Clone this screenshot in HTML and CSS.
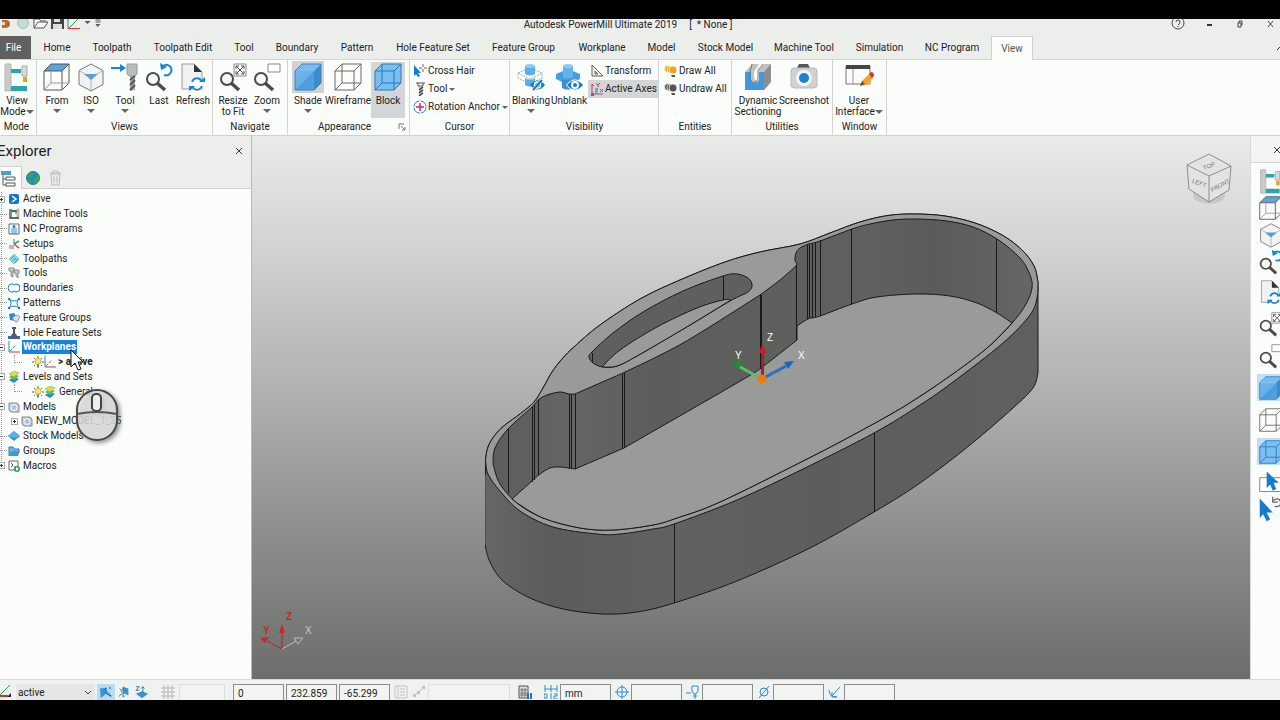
FILE: index.html
```html
<!DOCTYPE html>
<html lang="en">
<head>
<meta charset="utf-8">
<title>Autodesk PowerMill Ultimate 2019</title>
<link rel="stylesheet" href="styles.css">
</head>
<body>
<svg class="defs" aria-hidden="true">
  <defs>
    <linearGradient id="blueFace" x1="0" y1="0" x2="1" y2="1"><stop offset="0" stop-color="#74b9ee"/><stop offset=".5" stop-color="#66afe8"/><stop offset=".51" stop-color="#4d9cdb"/><stop offset="1" stop-color="#55a2df"/></linearGradient>
    <linearGradient id="wallShade" x1="0" x2="1"><stop offset="0" stop-color="#646763"/><stop offset=".12" stop-color="#5a5d59"/><stop offset=".35" stop-color="#5f625e"/><stop offset=".6" stop-color="#5b5e5a"/><stop offset="1" stop-color="#5e615d"/></linearGradient>
    <linearGradient id="innerShade" x1="0" x2="1"><stop offset="0" stop-color="#5b5e5a"/><stop offset=".15" stop-color="#636662"/><stop offset=".3" stop-color="#5b5e5a"/><stop offset=".7" stop-color="#5e615d"/><stop offset=".82" stop-color="#595c58"/><stop offset="1" stop-color="#646763"/></linearGradient>
  </defs>
  <symbol id="i-mode" viewBox="0 0 30 30"><path d="M3 2h6v27H3z" fill="#c9cbca" stroke="#b4b6b5"/><path d="M9 7h10v4H9zM9 24h16v5H9z" fill="#2aa5a8"/><path d="M20 4h5v10h-5z" fill="#d9dbda" stroke="#aaa"/><path d="M21 15h4v5h-4z" fill="#eda020"/></symbol>
  <symbol id="i-machine" viewBox="0 0 12 12"><path d="M1 1h3v10H1z" fill="#888"/><path d="M3 2h6v2H3z" fill="#157f86"/><path d="M9 1h2v8H9z" fill="#ccc" stroke="#888" stroke-width=".5"/><path d="M2 9h9v2H2z" fill="#5a6b6d"/><path d="M7 4h2v2H7z" fill="#eda020"/></symbol>
  <symbol id="i-from" viewBox="0 0 30 30"><path d="M2 9 9 2h18l-7 7z" fill="#5aa5e0"/><g fill="none" stroke="#555"><path d="M2 9h18v19H2zM2 9l7-7h18v19l-7 7M20 9l7-7"/><path d="M9 10v11h18M9 21l-7 7" stroke="#999"/></g></symbol>
  <symbol id="i-iso" viewBox="0 0 30 30"><path d="m15 2 12 6.500v14L15 29 3 22.500v-14z" fill="#f2f3f4" stroke="#777"/><path d="M8 12h14l-7 6z" fill="#4a9fe0"/><path d="m3 8.500 12 7 12-7M15 16v13" fill="none" stroke="#999" stroke-width=".7"/></symbol>
  <symbol id="i-tool" viewBox="0 0 30 30"><path d="M1 6h11" stroke="#1683d8" stroke-width="2"/><path d="m10 2 6 4-6 4z" fill="#1683d8"/><path d="M17 2h10v10l-2 2h-6l-2-2z" fill="#bbbdbd" stroke="#999"/><path d="M20 14h5v14l-5 1z" fill="#aaa"/><path d="m20 18 5-4M20 23l5-5M20 28l5-5" stroke="#555" stroke-width="2"/></symbol>
  <symbol id="i-lens" viewBox="0 0 30 30"><circle cx="9" cy="17" r="6" fill="#f8f8f8" stroke="#4b4b4b" stroke-width="2"/><path d="m13 21 8 7" stroke="#4b4b4b" stroke-width="3.500"/></symbol>
  <symbol id="i-last" viewBox="0 0 30 30"><use href="#i-lens"/><path d="M18 5c5-5 11 0 9 5-1 3-4 4-7 3" fill="none" stroke="#1683d8" stroke-width="2"/><path d="m16 1 1 7 6-3z" fill="#1683d8"/></symbol>
  <symbol id="i-refresh" viewBox="0 0 30 30"><path d="M4 2h12l8 8v17H4z" fill="#f0f1f1" stroke="#999"/><path d="M16 2v8h8z" fill="#333"/><circle cx="19" cy="22" r="7" fill="#fcfcfc"/><path d="M14 20c2-5 8-5 10 0M24 24c-2 5-8 5-10 0" fill="none" stroke="#1683d8" stroke-width="2"/><path d="M21 20h6v-5zM17 24h-6v5z" fill="#1683d8"/></symbol>
  <symbol id="i-resize" viewBox="0 0 30 30"><use href="#i-lens"/><path d="M16 2h12v12H16z" fill="#fff" stroke="#888"/><path d="m18 4 8 8m0-8-8 8M18 7V4h3M23 4h3v3M26 9v3h-3M21 12h-3V9" fill="none" stroke="#555"/></symbol>
  <symbol id="i-zoom" viewBox="0 0 30 30"><use href="#i-lens"/><path d="M16 2h12v8H16z" fill="#fff" stroke="#888"/></symbol>
  <symbol id="i-shade" viewBox="0 0 30 30"><path d="m2 9 7-7h19l-7 7z" fill="#7abcf0"/><path d="M2 9h19v19H2z" fill="url(#blueFace)"/><path d="m21 9 7-7v19l-7 7z" fill="#3b8cca"/><path d="m2 9 7-7h19v19l-7 7H2z" fill="none" stroke="#3b85bd"/></symbol>
  <symbol id="i-wire" viewBox="0 0 30 30"><path d="M2 9h19v19H2zM9 2h19v19H9zM2 9l7-7M21 9l7-7M2 28l7-7M21 28l7-7" fill="none" stroke="#666"/></symbol>
  <symbol id="i-block" viewBox="0 0 30 30"><path d="m2 9 7-7h19v19l-7 7H2z" fill="#78bff4"/><path d="M2 9h19v19H2zM9 2h19v19H9zM2 9l7-7M21 9l7-7M2 28l7-7M21 28l7-7" fill="none" stroke="#2f79b0"/></symbol>
  <symbol id="i-blank" viewBox="0 0 30 30"><path d="m2 11 12-5 12 5v5l-12 6-12-6zM2 11l12 6 12-6" fill="none" stroke="#aaa" stroke-dasharray="2 1"/><path d="M9 4h10v8q-5 3-10 0zM9 16q5 3 10 0v7q-5 3-10 0z" fill="#5badea"/><ellipse cx="14" cy="4" rx="5" ry="2" fill="#8ccbf5"/><path d="M14 23q8-9 15 0-7 9-15 0" fill="#1978c8"/><circle cx="21.500" cy="23" r="3" fill="#1978c8" stroke="#fff" stroke-width="1.500"/><path d="m17 28 9-10" stroke="#fff" stroke-width="3"/><path d="m17 28 9-10" stroke="#1978c8" stroke-width="2"/></symbol>
  <symbol id="i-unblank" viewBox="0 0 30 30"><path d="m2 12 12-5 12 5v5l-12 6-12-6z" fill="#469de0"/><path d="M8 18h12v8q-6 3-12 0z" fill="#3b8fd2"/><path d="M9 4h10v11q-5 3-10 0z" fill="#65b3ec"/><ellipse cx="14" cy="4" rx="5" ry="2" fill="#8ccbf5"/><path d="M12 23q9-11 18 0-9 11-18 0" fill="#fff"/><path d="M13 23q8-9 16 0-8 9-16 0" fill="#1978c8"/><circle cx="21" cy="23" r="3" fill="#1978c8" stroke="#fff" stroke-width="2"/></symbol>
  <symbol id="i-section" viewBox="0 0 30 30"><path d="m2 10 7-8h7l-5 8v6q1 4 5 2V7l5-5h7v18l-7 8H2z" fill="#bfc1c2"/><path d="M2 10h6v7q0 4 4 4t4-4v-7h5v18H2z" fill="#3f99dd"/><path d="m21 10 7-8v18l-7 8z" fill="#8c8f91"/><path d="M9 2 7 10v7q2 5 6 3l2-3V8l5-6" fill="none" stroke="#777"/></symbol>
  <symbol id="i-camera" viewBox="0 0 30 30"><path d="m8 6 2-4h9l2 4z" fill="#555"/><rect x="2" y="6" width="26" height="20" rx="3" fill="#cfd1d2" stroke="#bbb"/><circle cx="15" cy="16" r="8" fill="#f4f4f4"/><circle cx="15" cy="16" r="5" fill="#1683d8"/></symbol>
  <symbol id="i-ui" viewBox="0 0 30 30"><path d="M2 4h24v18H2z" fill="#fafafa" stroke="#777"/><path d="M2 3h24v4H2z" fill="#444"/><path d="M9 7v15" stroke="#999"/><path d="m16 24 2-5 7-7 4 4-7 7z" fill="#f2a51e"/><path d="m25 12 2-2q3 0 3 4l-2 2z" fill="#e12f2b"/><path d="m16 24 2-5 3 3z" fill="#555"/></symbol>
  <symbol id="i-cross" viewBox="0 0 14 14"><path d="m1 1 7 8H5l2 3-2 1-2-3-2 2z" fill="#147bcd"/><path d="M10 0v3m0 2v3M6 4h3m2 0h3" stroke="#666"/></symbol>
  <symbol id="i-toolcur" viewBox="0 0 14 14"><path d="M3 1h9M5 1v3h5V1" fill="none" stroke="#555"/><path d="M6 5h4v7l-4 2z" fill="#bbb"/><path d="m6 8 4-3M6 11l4-3M6 14l4-3" stroke="#444" stroke-width="1.500"/></symbol>
  <symbol id="i-anchor" viewBox="0 0 14 14"><circle cx="7" cy="7" r="6" fill="#fff" stroke="#1683d8" stroke-dasharray="8 1.400"/><path d="M7 3v8M3 7h8" stroke="#d51d70" stroke-width="1.500"/></symbol>
  <symbol id="i-transform" viewBox="0 0 14 14"><path d="M2 1v11h11zM5 7v3h3z" fill="none" stroke="#555"/></symbol>
  <symbol id="i-axes" viewBox="0 0 14 14"><path d="M2 2v10h11M2 2l2 2M6 1l2 2 2-2M8 3v2" fill="none" stroke="#d43b3b"/><path d="M5 7h3l-3 3h3" fill="none" stroke="#1683d8"/><path d="m10 7 3 3m0-3-3 3" stroke="#d43b3b"/><path d="M1 11h3v3H1z" fill="#1683d8"/></symbol>
  <symbol id="i-coins" viewBox="0 0 14 14"><g fill="currentColor" stroke="#fff" stroke-width=".7"><circle cx="4" cy="5" r="3.500"/><circle cx="6.500" cy="5.500" r="3.500"/><circle cx="9" cy="6" r="4"/></g><path d="M7 11h4v2H8z" fill="#555"/></symbol>
  <symbol id="i-active" viewBox="0 0 12 12"><rect x="1" y="1" width="10" height="10" rx="2" fill="#1874c5"/><path d="m4 3 4 3-4 3" fill="none" stroke="#fff" stroke-width="1.500"/></symbol>
  <symbol id="i-nc" viewBox="0 0 12 12"><path d="M1 1h10v10H1z" fill="#fff" stroke="#666"/><circle cx="6" cy="3.500" r="1.500" fill="#1683d8"/><path d="M3 6h6M3 8h6M3 10h6" stroke="#2c8bd0"/></symbol>
  <symbol id="i-setup" viewBox="0 0 12 12"><path d="M1 7h5v4H1z" fill="#bbb"/><path d="M6 1v5" stroke="#1683d8"/><path d="m6 6 5-3" stroke="#39a84c" stroke-width="1.500"/><path d="m6 6 5 4" stroke="#d33" stroke-width="1.500"/></symbol>
  <symbol id="i-path" viewBox="0 0 12 12"><path d="m6 1 5 5-5 5-5-5z" fill="#81dce3" stroke="#6fd3dc"/><path d="m3 6 3-3m-1 5 3-3m-1 5 3-4" stroke="#29aebb"/></symbol>
  <symbol id="i-tools" viewBox="0 0 12 12"><path d="M1 1h5v3H5v6L3 9V4H1zM6 3h5v3h-1v5L8 9V6H6z" fill="#ccc" stroke="#777" stroke-width=".8"/></symbol>
  <symbol id="i-bound" viewBox="0 0 12 12"><path d="M3 2h2q1 2 3 0 4 0 4 4t-4 4q-2-2-3 0H3Q0 9 0 6t3-4z" fill="none" stroke="#167bcd"/></symbol>
  <symbol id="i-pattern" viewBox="0 0 12 12"><path d="M1 2q5 4 10 0-4 4 0 9-5-4-10 0 4-5 0-9z" fill="none" stroke="#1683d8"/><path d="M0 1h2v2H0zM10 1h2v2h-2zM0 10h2v2H0zM10 10h2v2h-2z" fill="#1683d8"/></symbol>
  <symbol id="i-feature" viewBox="0 0 12 12"><path d="M1 2 6 1l2 3-1 5-5-1z" fill="#2e87cd"/><path d="m5 5 4-2 3 2-3 5-4-2z" fill="#d5e7f4" stroke="#899"/></symbol>
  <symbol id="i-hole" viewBox="0 0 12 12"><path d="M4 0h4v2H7v4q3 3 3 6H2q0-3 3-6V2H4z" fill="#557"/><path d="M0 9h3v3H0zM9 9h3v3H9z" fill="#2d6fa8"/></symbol>
  <symbol id="i-wp" viewBox="0 0 12 12"><path d="M1 0v11" stroke="#2c8bd0"/><path d="m2 10 6-6" stroke="#2da75a" stroke-dasharray="3 1"/><path d="M1 11h11" stroke="#d33"/></symbol>
  <symbol id="i-levels" viewBox="0 0 12 12"><path d="m1 9 5-3 5 2-5 4z" fill="#208dc2"/><path d="m1 6 5-3 5 2-5 4z" fill="#56c266"/><path d="m1 3 5-3 5 2-5 4z" fill="#ecd944" stroke="#65ab58" stroke-width=".5"/></symbol>
  <symbol id="i-model" viewBox="0 0 12 12"><path d="M1 2h8l2 2v7H3L1 9z" fill="#c8ccd0" stroke="#888"/><circle cx="6" cy="6.500" r="3" fill="#9fc8e7" stroke="#fff"/></symbol>
  <symbol id="i-stock" viewBox="0 0 12 12"><path d="m0 6 6-5 6 5-6 5z" fill="#368fd0"/><path d="m0 6 6-5 6 5-6 2z" fill="#55b1e9"/></symbol>
  <symbol id="i-folder" viewBox="0 0 12 12"><path d="M1 11V2h4l1 2h5v2" fill="#73b6e8" stroke="#287ab7"/><path d="M1 11 3 6h9l-2 5z" fill="#4497d5"/></symbol>
  <symbol id="i-macro" viewBox="0 0 12 12"><path d="M1 1h9v9H1z" fill="#fafafa" stroke="#666"/><path d="m3 3 2 2-2 2m3 0h3" fill="none" stroke="#555"/><circle cx="9" cy="9" r="3" fill="#28a355"/><path d="m8 7 3 2-3 2z" fill="#fff"/></symbol>
  <symbol id="i-bulb" viewBox="0 0 12 12"><path d="M6 0v12M0 6h12M2 2l8 8m0-8-8 8" stroke="#555" stroke-dasharray="2 8"/><circle cx="6" cy="5.500" r="3" fill="#ffe85c" stroke="#c8b64b"/><path d="M5 8h2v3H5z" fill="#888"/></symbol>
  <symbol id="i-plane-yz" viewBox="0 0 16 16"><path d="m1 4 7-1v7l-6 5z" fill="#3993d7"/><path d="M8 3v6l6 4" fill="none" stroke="#246ea5" stroke-width="1.500"/><path d="m9 7 4 3M11 2l3 3m0-3-3 3" stroke="#3993d7"/></symbol>
  <symbol id="i-plane-xz" viewBox="0 0 16 16"><path d="m7 2 6 2v8l-6-3z" fill="#3993d7"/><path d="M7 2v12M7 9l-5 4M3 4l2 2 2-2M5 6v2M7 14l2-2" fill="none" stroke="#246ea5"/></symbol>
  <symbol id="i-grid" viewBox="0 0 14 14"><path d="M3 0v14M7 0v14M11 0v14M0 3h14M0 7h14M0 11h14" stroke="#b5b7b5"/></symbol>
</svg>

<div class="letterbox letterbox-top"></div>
<div class="app">
  <header class="titlebar">
    <div class="quick">
      <svg class="q-logo" viewBox="0 0 10 16"><path d="M0 1h4q4 0 4 4t-5 4H0z" fill="#b36b2e"/><path d="M0 3h3v3H0z" fill="#f0d9c2"/></svg>
      <svg class="q-icon" viewBox="0 0 16 16"><circle cx="8" cy="4" r="5.500" fill="#c4ddd2" stroke="#9fbfb4"/></svg>
      <svg class="q-icon" viewBox="0 0 16 16"><path d="M2 9V0h5l2 2h5M2 9l4-6h10l-4 6z" fill="#f8f8f8" stroke="#555"/></svg>
      <svg class="q-icon" viewBox="0 0 16 16"><path d="M2 0h13v10H2z" fill="#444"/><path d="M5 0h6v3H5zM4 5h9v5H4z" fill="#ddd"/></svg>
      <svg class="q-icon" viewBox="0 0 16 16"><path d="M2 0v10" stroke="#1683d8"/><path d="m3 9 9-9" stroke="#259a55"/><path d="M2 9.500h12" stroke="#d33"/></svg>
      <svg class="q-arrow" viewBox="0 0 8 8"><path d="M1 2h6L4 5z" fill="#555"/></svg>
      <svg class="q-arrow" viewBox="0 0 8 8"><path d="M2 1h5M2 3h5" stroke="#555"/><path d="M2 5h5L4 8z" fill="#555"/></svg>
    </div>
    <div class="title"><span>Autodesk PowerMill Ultimate 2019</span><span>[ &nbsp;* None ]</span></div>
    <div class="controls">
      <button aria-label="Help"><svg viewBox="0 0 14 14"><circle cx="7" cy="4" r="6" fill="none" stroke="#444"/><path d="M5 3q0-2 2-2t2 2-2 3M7 7v1" fill="none" stroke="#444"/></svg></button>
      <button aria-label="Minimize"><svg viewBox="0 0 14 14"><path d="M5 6h5" stroke="#333" stroke-width="2"/></svg></button>
      <button aria-label="Restore"><svg viewBox="0 0 14 14"><path d="M5 4h3v4H5zM6 4V2h3v4H8" fill="none" stroke="#444"/></svg></button>
      <button aria-label="Close"><svg viewBox="0 0 14 14"><path d="m4 2 5 6m0-6L4 8" stroke="#444"/></svg></button>
    </div>
  </header>

  <nav class="tabs">
    <button class="tab file">File</button><button class="tab">Home</button><button class="tab">Toolpath</button><button class="tab">Toolpath Edit</button><button class="tab">Tool</button><button class="tab">Boundary</button><button class="tab">Pattern</button><button class="tab">Hole Feature Set</button><button class="tab">Feature Group</button><button class="tab">Workplane</button><button class="tab">Model</button><button class="tab">Stock Model</button><button class="tab">Machine Tool</button><button class="tab">Simulation</button><button class="tab">NC Program</button><button class="tab current">View</button><button class="tab collapse" aria-label="Collapse ribbon"><svg viewBox="0 0 8 8"><path d="m1 6 3-3 3 3" fill="none" stroke="#333"/></svg></button>
  </nav>

  <div class="ribbon">
    <section class="group g-mode"><div class="tools">
      <button class="big"><svg class="ico"><use href="#i-mode"/></svg><span>View</span><span class="drop-line">Mode<i class="caret"></i></span></button>
    </div><h2>Mode</h2></section>
    <section class="group g-views"><div class="tools">
      <button class="big"><svg class="ico"><use href="#i-from"/></svg><span>From</span><i class="caret"></i></button>
      <button class="big"><svg class="ico"><use href="#i-iso"/></svg><span>ISO</span><i class="caret"></i></button>
      <button class="big"><svg class="ico"><use href="#i-tool"/></svg><span>Tool</span><i class="caret"></i></button>
      <button class="big"><svg class="ico"><use href="#i-last"/></svg><span>Last</span></button>
      <button class="big"><svg class="ico"><use href="#i-refresh"/></svg><span>Refresh</span></button>
    </div><h2>Views</h2></section>
    <section class="group g-nav"><div class="tools">
      <button class="big"><svg class="ico"><use href="#i-resize"/></svg><span>Resize</span><span>to Fit</span></button>
      <button class="big"><svg class="ico"><use href="#i-zoom"/></svg><span>Zoom</span><i class="caret"></i></button>
    </div><h2>Navigate</h2></section>
    <section class="group g-look"><div class="tools">
      <button class="big lit"><svg class="ico"><use href="#i-shade"/></svg><span>Shade</span><i class="caret"></i></button>
      <button class="big wide"><svg class="ico"><use href="#i-wire"/></svg><span>Wireframe</span></button>
      <button class="big pressed"><svg class="ico"><use href="#i-block"/></svg><span>Block</span></button>
    </div><div class="foot"><h2>Appearance</h2><button class="launcher" aria-label="Appearance options"><svg viewBox="0 0 8 8"><path d="M1 6V1h5M3 3l4 4M7 4v3H4" fill="none" stroke="#777"/></svg></button></div></section>
    <section class="group g-cursor"><div class="stack">
      <button class="small"><svg><use href="#i-cross"/></svg>Cross Hair</button>
      <button class="small"><svg><use href="#i-toolcur"/></svg>Tool<i class="caret"></i></button>
      <button class="small"><svg><use href="#i-anchor"/></svg>Rotation Anchor<i class="caret"></i></button>
    </div><h2>Cursor</h2></section>
    <section class="group g-vis"><div class="tools">
      <button class="big medium"><svg class="ico"><use href="#i-blank"/></svg><span>Blanking</span><i class="caret"></i></button>
      <button class="big medium"><svg class="ico"><use href="#i-unblank"/></svg><span>Unblank</span></button>
      <div class="stack"><button class="small"><svg><use href="#i-transform"/></svg>Transform</button><button class="small pressed"><svg><use href="#i-axes"/></svg>Active Axes</button></div>
    </div><h2>Visibility</h2></section>
    <section class="group g-ent"><div class="stack">
      <button class="small"><svg class="gold"><use href="#i-coins"/></svg>Draw All</button>
      <button class="small"><svg class="dim"><use href="#i-coins"/></svg>Undraw All</button>
    </div><h2>Entities</h2></section>
    <section class="group g-util"><div class="tools">
      <button class="big wide"><svg class="ico"><use href="#i-section"/></svg><span>Dynamic</span><span>Sectioning</span></button>
      <button class="big wide"><svg class="ico"><use href="#i-camera"/></svg><span>Screenshot</span></button>
    </div><h2>Utilities</h2></section>
    <section class="group g-win"><div class="tools">
      <button class="big wide"><svg class="ico"><use href="#i-ui"/></svg><span>User</span><span class="drop-line">Interface<i class="caret"></i></span></button>
    </div><h2>Window</h2></section>
  </div>

  <main class="work">
    <aside class="explorer">
      <header class="panel-head"><h1>Explorer</h1><button aria-label="Close Explorer"><svg viewBox="0 0 8 8"><path d="m1 1 6 6m0-6L1 7" stroke="#333"/></svg></button></header>
      <div class="panel-tabs">
        <button class="on" aria-label="Tree"><svg viewBox="0 0 16 16"><path d="M0 0h10v4H0z" fill="#4a9cdb"/><path d="M2 4v10h3M2 8h3M5 6h9v3H5zM5 12h9v3H5z" fill="none" stroke="#555"/></svg></button>
        <button aria-label="Web"><svg viewBox="0 0 16 16"><circle cx="8" cy="8" r="6.500" fill="#2387c8" stroke="#37739a"/><path d="M3 4q5-4 6-1l-2 3-1 2-4-1zM9 8l5-3 1 4-4 5-3-1zM3 9l3 2 1 4-4-3z" fill="#36a65b"/></svg></button>
        <button aria-label="Recycle bin" disabled><svg viewBox="0 0 16 16"><path d="M4 4h9l-1 11H5zM3 3h11M6 3V1h5v2M7 6v7M10 6v7" fill="none" stroke="#bbb"/></svg></button>
      </div>
      <ul class="tree">
        <li><i class="box plus"></i><svg><use href="#i-active"/></svg><span>Active</span></li>
        <li><i></i><svg><use href="#i-machine"/></svg><span>Machine Tools</span></li>
        <li><i></i><svg><use href="#i-nc"/></svg><span>NC Programs</span></li>
        <li><i></i><svg><use href="#i-setup"/></svg><span>Setups</span></li>
        <li><i></i><svg><use href="#i-path"/></svg><span>Toolpaths</span></li>
        <li><i></i><svg><use href="#i-tools"/></svg><span>Tools</span></li>
        <li><i></i><svg><use href="#i-bound"/></svg><span>Boundaries</span></li>
        <li><i></i><svg><use href="#i-pattern"/></svg><span>Patterns</span></li>
        <li><i></i><svg><use href="#i-feature"/></svg><span>Feature Groups</span></li>
        <li><i></i><svg><use href="#i-hole"/></svg><span>Hole Feature Sets</span></li>
        <li><i class="box"></i><svg><use href="#i-wp"/></svg><span class="selected">Workplanes</span></li>
        <li class="child"><i class="elbow"></i><svg><use href="#i-bulb"/></svg><svg><use href="#i-wp"/></svg><b>&gt; active</b></li>
        <li><i class="box"></i><svg><use href="#i-levels"/></svg><span>Levels and Sets</span></li>
        <li class="child"><i class="elbow"></i><svg><use href="#i-bulb"/></svg><svg><use href="#i-levels"/></svg><span>General</span></li>
        <li><i class="box"></i><svg><use href="#i-model"/></svg><span>Models</span></li>
        <li class="model"><i class="box plus"></i><svg><use href="#i-model"/></svg><span>NEW_MODEL_1_25</span></li>
        <li><i></i><svg><use href="#i-stock"/></svg><span>Stock Models</span></li>
        <li><i></i><svg><use href="#i-folder"/></svg><span>Groups</span></li>
        <li><i class="box plus"></i><svg><use href="#i-macro"/></svg><span>Macros</span></li>
      </ul>
      <svg class="pointer" viewBox="0 0 14 22"><path d="M1 1v17l4-4 3 7 3-1-3-7h5z" fill="#fff" stroke="#111"/></svg>
      <svg class="mouse" viewBox="0 0 50 60"><rect x="5" y="4" width="40" height="50" rx="20" fill="#f6f6f6" fill-opacity=".65" stroke="#484848" stroke-width="2"/><path d="M5 28q20-4 40 0" fill="none" stroke="#555" stroke-width="2"/><rect x="20" y="8" width="9" height="17" rx="4" fill="#eee" stroke="#444" stroke-width="2"/></svg>
    </aside>

    <section class="canvas" aria-label="Graphics view">
      <svg class="scene" viewBox="252 136 998 543" preserveAspectRatio="xMidYMid meet">
        <g class="part">
          <path id="body" fill="url(#wallShade)"/>
          <path id="rim" fill="#999b98"/>
          <path id="pocket" fill="url(#innerShade)"/>
          <path id="floor" fill="#999b98"/>
          <path id="slot" fill="#5d605c"/>
          <path id="slotFloor" fill="#999b98"/>
          <path d="M508.500 429v64M532.500 406v76M534.500 404v76M538.500 400v75M569.500 394v75M571.500 394v75M575.500 394v75M622.500 374v75M624.500 373v75M760.500 295v74M761.500 295v74M796.500 265v75M807.500 245v74M809.500 244v74M812.500 243v75M815.500 242v75M820.500 240v75M851.500 229v75M996.500 239v74M723.500 276v24M592.500 353v9M674.500 524v79M874.500 433v79"/>
        </g>
        <path d="M485.500 475v70" stroke="#a65239" stroke-width=".7"/>
        <g class="triad">
          <path d="m762 379 24-13" stroke="#2a6fc0" stroke-width="3"/><path d="m794 361-10 1 4 7z" fill="#1f62b8"/>
          <path d="m762 379-22-12" stroke="#5dc060" stroke-width="3"/><path d="m732 362 10 0-4 8z" fill="#218b35"/>
          <path d="M762.500 379v-27" stroke="#a5202b" stroke-width="3"/><path d="m762.500 344 4 9h-8z" fill="#c31e2b"/>
          <circle cx="762" cy="379" r="4.500" fill="#e77d08"/>
          <text x="767" y="341">Z</text><text x="735" y="359">Y</text><text x="798" y="359">X</text>
        </g>
        <g class="origin">
          <path d="M282 649v-19M282 649l-15-8" stroke="#b42323" fill="none"/><path d="m282 624 3 9h-6zM260 638l9-1-4 6z" fill="#c62828"/>
          <path d="m282 649 14-8" stroke="#bbb"/><path d="m303 638-9 0 4 6z" fill="none" stroke="#bbb"/>
          <text x="286" y="620" class="red">Z</text><text x="263" y="634" class="red">Y</text><text x="305" y="634" class="pale">X</text>
        </g>
        <g class="cube">
          <ellipse cx="1209" cy="195" rx="16" ry="9" fill="#777" opacity=".2"/>
          <path d="m1209 154 22 12-2 24-20 12-20-13-2-24z" fill="#e2e4e2" stroke="#777" stroke-width=".8"/>
          <path d="m1187 165 22 11 22-10M1209 176v26" fill="none" stroke="#777" stroke-width=".8"/>
          <text x="1203" y="168" transform="rotate(-20 1209 166)">TOP</text><text x="1192" y="185" transform="rotate(20 1199 183)">LEFT</text><text x="1210" y="188" transform="rotate(-28 1219 186)">FRONT</text>
        </g>
      </svg>
    </section>

    <aside class="dock">
      <header><button aria-label="Close toolbar"><svg viewBox="0 0 8 8"><path d="m1 1 6 6m0-6L1 7" stroke="#333"/></svg></button></header>
      <div class="dock-tight">
        <button aria-label="View mode"><svg><use href="#i-mode"/></svg></button><button aria-label="From"><svg><use href="#i-from"/></svg></button><button aria-label="ISO"><svg><use href="#i-iso"/></svg></button><button aria-label="Last"><svg><use href="#i-last"/></svg></button>
      </div>
      <div class="dock-loose">
        <button aria-label="Refresh"><svg><use href="#i-refresh"/></svg></button><button aria-label="Resize to fit"><svg><use href="#i-resize"/></svg></button><button aria-label="Zoom"><svg><use href="#i-zoom"/></svg></button><button class="on" aria-label="Shade"><svg><use href="#i-shade"/></svg></button><button aria-label="Wireframe"><svg><use href="#i-wire"/></svg></button><button class="on" aria-label="Block"><svg><use href="#i-block"/></svg></button>
      </div>
      <div class="dock-tight last">
        <button aria-label="Box select"><svg viewBox="0 0 30 30"><path d="M2 10h28v16H2z" fill="#fff" stroke="#777"/><path d="m10 3 14 13h-6l3 7-4 2-3-7-4 4z" fill="#147bcd"/></svg></button><button aria-label="Select last"><svg viewBox="0 0 30 30"><path d="m2 3 15 16h-7l4 8-4 2-4-8-4 4z" fill="#147bcd"/><path d="M18 5q7-4 8 2t-7 5M17 1v6h6" fill="none" stroke="#666" stroke-width="1.500"/></svg></button>
      </div>
    </aside>
  </main>

  <footer class="status">
    <svg class="wp" viewBox="0 0 14 14"><path d="m0 11 10-10" stroke="#259a55"/><path d="M0 12h8" stroke="#c33" stroke-width="2"/><path d="M11 9v4H7z" fill="#222"/></svg>
    <div class="picker"><select class="plane" aria-label="Active workplane"><option>active</option></select><svg class="chevron" viewBox="0 0 8 8"><path d="m1 2 3 3 3-3" fill="none" stroke="#444"/></svg></div>
    <button class="sq on" aria-label="YZ plane"><svg><use href="#i-plane-yz"/></svg></button>
    <button class="sq" aria-label="XZ plane"><svg><use href="#i-plane-xz"/></svg></button>
    <button class="sq" aria-label="XY plane"><svg viewBox="0 0 16 16"><path d="m1 10 7-3 7 3-7 5z" fill="#3993d7"/><path d="M9 2v7M7 4l2-2 2 2M1 2h4L1 6h4" fill="none" stroke="#246ea5"/></svg></button>
    <button class="sq grid-btn" aria-label="Grid"><svg><use href="#i-grid"/></svg></button>
    <input class="field off" aria-label="Grid size" disabled>
    <input class="field first" aria-label="X" value="0">
    <input class="field" aria-label="Y" value="232.859">
    <input class="field" aria-label="Z" value="-65.299">
    <button class="sq" aria-label="Position"><svg viewBox="0 0 14 14"><path d="M1 1h12v12H1zM4 1v12M6 4h5M6 7h5M6 10h5" fill="none" stroke="#c3c5c3"/></svg></button>
    <button class="sq" aria-label="Measure"><svg viewBox="0 0 14 14"><path d="m2 11 9-8" stroke="#bbb"/><path d="M1 9h3v3H1zM5 6h3v3H5zM10 1h3v3h-3z" fill="#c1c3c1"/></svg></button>
    <input class="field off long" aria-label="Distance" disabled>
    <button class="sq" aria-label="Calculator"><svg viewBox="0 0 14 14"><path d="M1 1h9v12H1z" fill="#ddd" stroke="#555"/><path d="M2 5h7M2 8h7M2 10h7M4 3v9M7 3v9" stroke="#777"/><path d="M9 8h2v6H9zM12 8h2v6h-2z" fill="#147bcd"/></svg></button>
    <button class="sq units" aria-label="Units"><svg viewBox="0 0 14 14"><path d="M1 0v7M7 0v7M13 0v7M1 4h12M0 9h3v4H0zM7 8v6M10 9h3v2h-3v3h4" fill="none" stroke="#2c8bd0"/></svg></button>
    <input class="field" aria-label="Unit" value="mm">
    <button class="sq" aria-label="Tolerance"><svg viewBox="0 0 14 14"><circle cx="7" cy="7" r="5" fill="none" stroke="#2c8bd0"/><path d="M7 0v14M0 7h14" stroke="#2c8bd0"/></svg></button>
    <input class="field" aria-label="Tolerance value">
    <button class="sq" aria-label="Thickness"><svg viewBox="0 0 14 14"><path d="M0 8h5M6 1h6v5l-2 3H8L6 6zM9 9v5M7 11h4" fill="none" stroke="#2c8bd0"/></svg></button>
    <input class="field" aria-label="Thickness value">
    <button class="sq" aria-label="Diameter"><svg viewBox="0 0 14 14"><circle cx="7" cy="7" r="4" fill="none" stroke="#2c8bd0"/><path d="M2 13 12 1" stroke="#2c8bd0"/></svg></button>
    <input class="field" aria-label="Diameter value">
    <button class="sq" aria-label="Tip radius"><svg viewBox="0 0 14 14"><path d="m12 2-8 9M1 5q0 7 8 7M4 7v5h5" fill="none" stroke="#2c8bd0"/></svg></button>
    <input class="field" aria-label="Tip radius value">
  </footer>
</div>
<div class="letterbox"></div>
<script src="scene.js"></script>
</body>
</html>
```
FILE: styles.css
```css
* { box-sizing: border-box; }
html, body { height: 100%; }
body {
  margin: 0;
  display: flex;
  flex-direction: column;
  overflow: hidden;
  background: #000;
  color: #222;
  font: 10px/12px Roboto, "Open Sans", sans-serif;
}
button, input, select { font: inherit; color: inherit; margin: 0; padding: 0; border: 0; background: none; border-radius: 0; }
h1, h2 { margin: 0; font-weight: 400; }
svg { display: block; flex: none; }
.defs { position: absolute; width: 0; height: 0; }
.letterbox { flex: none; height: 20px; }
.letterbox-top { height: 19px; }
.app { flex: 1; min-height: 0; display: flex; flex-direction: column; background: #eceeec; }

.titlebar { flex: none; height: 17px; display: flex; overflow: hidden; }
.quick { width: 100px; display: flex; gap: 1px; }
.q-logo { width: 14px; height: 16px; }
.q-icon { width: 16px; height: 16px; }
.q-arrow { width: 9px; height: 8px; }
.title { flex: 1; display: flex; justify-content: center; gap: 12px; line-height: 11px; }
.controls { width: 124px; padding-left: 6px; display: flex; overflow: hidden; }
.controls button { flex: none; width: 31px; height: 14px; display: flex; justify-content: center; }
.controls svg { width: 14px; height: 14px; }

.tabs {
  flex: none;
  height: 24px;
  display: grid;
  grid-template-columns: 31px 52px 58px 84px 38px 68px 52px 100px 81px 76px 43px 85px 72px 79px 66px 48px 1fr;
  border-bottom: 1px solid #d4d6d4;
}
.tab { white-space: nowrap; text-align: center; }
.file { background: #5f605f; color: #fff; padding-right: 4px; }
.current { background: #fbfdfb; border: 1px solid #cfd1cf; border-bottom: 0; margin-bottom: -1px; margin-left: 6px; color: #555; }
.collapse { display: flex; justify-content: flex-end; align-items: center; }
.collapse svg { width: 8px; height: 8px; margin-right: -4px; }

.ribbon { flex: none; height: 76px; display: flex; background: #fbfdfb; border-bottom: 1px solid #cfd1cf; }
.group { display: flex; flex-direction: column; justify-content: space-between; padding: 2px 3px; border-right: 1px solid #d2d4d2; }
.group h2 { flex: 1; font-size: 10px; line-height: 12px; text-align: center; }
.tools + h2, .stack + h2, .foot { flex: none; }
.tools { display: flex; }
.g-mode { width: 37px; padding-left: 0; }
.g-views { width: 176px; }
.g-nav { width: 75px; }
.g-look { width: 122px; }
.g-cursor { width: 100px; padding-left: 1px; padding-right: 1px; }
.g-vis { width: 149px; padding-left: 2px; padding-right: 1px; }
.g-ent { width: 73px; }
.g-util { width: 101px; }
.g-win { width: 54px; }
.big { flex: none; width: 34px; height: 56px; display: flex; flex-direction: column; align-items: center; line-height: 11px; white-space: nowrap; }
.medium { width: 38px; }
.wide { width: 46px; }
.ico { width: 30px; height: 30px; margin-bottom: 3px; }
.caret { display: inline-block; border: 4px solid transparent; border-top-color: #666; border-bottom: 0; margin: 3px 0 0; }
.drop-line { display: flex; align-items: center; }
.drop-line .caret { margin: 0; }
.pressed { background: #d3d6d8; }
.lit .ico { background: #cfd2d4; outline: 2px solid #cfd2d4; outline-offset: -1px; }
.foot { display: flex; }
.launcher svg { width: 8px; height: 8px; }
.stack { display: flex; flex-direction: column; align-items: stretch; }
.small { height: 18px; display: flex; align-items: center; gap: 1px; padding: 0 1px 0 2px; white-space: nowrap; }
.small svg { width: 14px; height: 14px; }
.small .caret { border-width: 3px; border-bottom: 0; margin: 0 0 0 1px; }
.gold { color: #efa31d; }
.dim { color: #555; }

.work { flex: 1; min-height: 0; display: flex; }
.explorer { position: relative; flex: none; width: 252px; display: flex; flex-direction: column; background: #fbfdfb; border-right: 1px solid #b9bbb9; overflow: hidden; }
.panel-head { height: 30px; display: flex; justify-content: space-between; align-items: center; padding-right: 8px; background: #eceeec; }
.panel-head h1 { margin-left: -3px; font-size: 15px; line-height: 20px; }
.panel-head svg { width: 8px; height: 8px; }
.panel-tabs { height: 23px; display: flex; background: #eceeec; border-bottom: 1px solid #cfd1cf; }
.panel-tabs button { width: 22px; display: flex; justify-content: center; padding-top: 4px; }
.panel-tabs svg { width: 16px; height: 16px; }
.panel-tabs .on { background: #fbfdfb; border: 1px solid #cfd1cf; border-width: 1px 1px 0 0; margin-bottom: -1px; padding-right: 3px; }
.tree { position: relative; list-style: none; margin: 3px 0 0; padding: 0; height: 281px; display: flex; flex-direction: column; }
.tree::before { content: ""; position: absolute; left: 1px; top: 0; bottom: 8px; border-left: 1px dotted #999; }
.tree li { flex: 1; min-height: 0; display: flex; align-items: center; }
.tree li > i { flex: none; width: 7px; margin-right: 1px; border-top: 1px dotted #999; }
.tree svg { width: 12px; height: 12px; }
.tree li > span { padding: 0 1px; margin-left: 2px; }
.tree li > .box { position: relative; width: 7px; height: 7px; border: 1px solid #aaa; background: #fff; margin-left: -2px; margin-right: 3px; }
.box::before { content: ""; position: absolute; left: 1px; right: 1px; top: 2px; height: 1px; background: #333; }
.plus::after { content: ""; position: absolute; top: 1px; bottom: 1px; left: 2px; width: 1px; background: #333; }
.tree .selected { background: #1683e0; color: #fff; font-weight: 700; line-height: 14px; }
.tree .child { padding-left: 14px; }
.tree li > .elbow { width: 8px; height: 8px; margin-right: 10px; margin-bottom: 7px; border: 0; border-left: 1px dotted #999; border-bottom: 1px dotted #999; }
.tree b { margin-left: 2px; }
.tree .model { padding-left: 13px; }
.pointer { position: absolute; left: 70px; top: 213px; width: 14px; height: 22px; }
.mouse { position: absolute; left: 72px; top: 250px; width: 50px; height: 60px; filter: drop-shadow(2px 2px 2px #777); }

.canvas { flex: 1; min-width: 0; background: linear-gradient(#e9ebe8, #d2d4d1 20%, #a9aba8 52%, #898b88 76%, #6c6e6b); }
.scene { width: 100%; height: 100%; }
.part path { stroke: #181918; stroke-width: 1; stroke-linejoin: round; }
.scene text { font: 10px "Liberation Sans", sans-serif; fill: #fff; }
.scene .red { fill: #c62828; font-weight: 700; }
.scene .pale { fill: #c9cbc9; }
.scene .cube text { font: 6px "Liberation Sans", sans-serif; fill: #777; }

.dock { flex: none; width: 30px; overflow: hidden; background: #fbfdfb; border-left: 1px solid #d8dad8; }
.dock header { height: 27px; padding: 10px 0 0 22px; background: #f3f5f3; border-bottom: 1px solid #d2d4d2; }
.dock header svg { width: 8px; height: 8px; }
.dock button { display: flex; }
.dock-tight, .dock-loose { display: flex; flex-direction: column; padding: 4px 0 3px 6px; }
.dock-loose { gap: 5px; padding-top: 0; }
.dock-tight button, .dock-loose button { width: 30px; height: 27px; align-items: center; }
.dock-tight svg, .dock-loose svg { width: 26px; height: 26px; margin-left: 1px; }
.dock-loose .on { background: #bfdff8; }
.dock .last { padding-top: 0; }

.status { flex: none; height: 21px; padding-top: 4px; display: flex; overflow: hidden; background: #f0f2f0; border-top: 1px solid #d8dad8; }
.wp { width: 14px; height: 14px; }
.picker { position: relative; width: 79px; height: 20px; margin: 0 2px; }
.plane { appearance: none; width: 100%; height: 20px; padding: 0 0 2px 2px; background: #e5e7e5; }
.chevron { position: absolute; right: 3px; top: 5px; width: 8px; height: 8px; pointer-events: none; }
.sq { flex: none; width: 18px; height: 20px; display: flex; justify-content: center; padding-top: 1px; }
.sq svg { width: 14px; height: 14px; }
.status .sq.on { background: #b9dcf5; }
.grid-btn { margin-left: 8px; margin-right: 2px; }
.field { flex: none; width: 51px; height: 20px; margin-right: 2px; padding: 0 4px 2px; border: 1px solid #8b8d8b; background: #f2f4f2; }
.off { width: 46px; border-color: #dcdedc; }
.first { margin-left: 6px; }
.long { width: 82px; margin-right: 6px; }
.units { margin-left: 8px; }
```
FILE: scene.js
```js
// Builds smooth outlines of the part from sampled edge points.
function smooth(points, closed) {
  const p = points.trim().split(/\s+/).map(s => s.split(',').map(Number));
  const n = p.length;
  const at = i => closed ? p[(i + n) % n] : p[Math.max(0, Math.min(n - 1, i))];
  let d = 'M' + p[0];
  for (let i = 0; i < (closed ? n : n - 1); i++) {
    const [a, b, c, e] = [at(i - 1), at(i), at(i + 1), at(i + 2)];
    d += 'C' + [b[0] + (c[0] - a[0]) / 6, b[1] + (c[1] - a[1]) / 6,
      c[0] - (e[0] - b[0]) / 6, c[1] - (e[1] - b[1]) / 6, c[0], c[1]].join(' ');
  }
  return d + (closed ? 'Z' : '');
}
const join = parts => parts.map((s, i) => i ? smooth(s).replace('M', 'L') : smooth(s)).join('') + 'Z';
const back = '485.500,460 488,447 495,435 505,425 520,414 534,402 543,388 552,372 562,359 575,346 600,325 640,299 680,280 725,262 760,252 800,244 830,233 860,222 888,215.500 915,214 945,216 975,223 1002,235 1022,250 1034,266 1038,282';
const rimFront = '1038,282 1037,298 1030,315 1003,343 953,382 920,405 874,433 803,469 737,500 674,524 653,529 620,534 597,534 553,527 520,511 500,491 488,474 485.500,460';
const innerFront = '1013,322 987,348 947,378 903,407 853,435 803,461 720,502 677,518 653,525 613,530 580,528 543,518 517,503';
const shapes = {
  body: join([back, '1038,282 1038,373', '1038,373 1033,388 1013,408 970,445 920,483 874,512 810,548 737,581 674,603 637,612 603,614 563,609 530,598 503,581 490,562 485.500,547']),
  rim: join([back, rimFront]),
  pocket: join(['493,464 495,448 508,429 532,407 538,400 547,395 560,392 569,394 575,394', '575,394 623,373', '623,373 683,343 760,295', '760,295 780,280 796,266', '797,264 795,260 796,253 800,248 808,244', '808,244 820,241 852,229 870,224 893,220 917,219 947,221 973,227 997,239 1020,258 1030,275 1032,288 1026,304 ' + innerFront + ' 500,484 493,464']),
  floor: join(['512,499 532,481 540,474 550,468 560,467 575,469', '575,469 624,448', '624,448 737,383 760,369', '760,369 797,340', '797,340 797,326', '797,326 808,319 820,316 852,304 877,297 917,294 950,296 977,303 997,313 1012,323', innerFront]),
  slot: smooth('589,357 592,352 613,333 643,312 683,291 723,276 737,274 748,278 752,285 748,292 730,301 685,328 637,356 617,366 603,367 593,363', true),
  slotFloor: join(['602,367 620,350 657,327 697,308 723,300 731,300', '731,300 685,328 637,356 617,366 602,367'])
};
for (const [id, d] of Object.entries(shapes)) document.getElementById(id).setAttribute('d', d);
```
